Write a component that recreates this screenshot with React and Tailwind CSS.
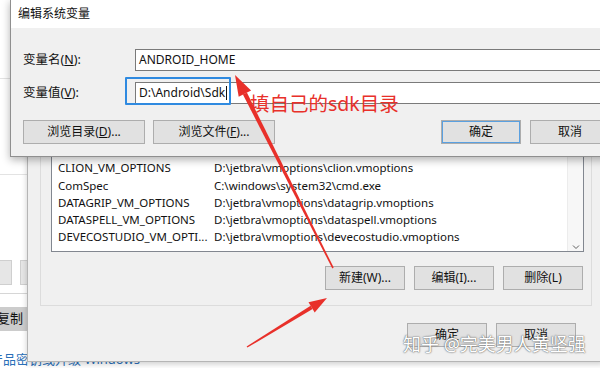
import React from 'react';

const font = "font-['Noto_Sans','Noto_Sans_CJK_SC',sans-serif]";

const rows = [
    ['CLION_VM_OPTIONS', 'D:\\jetbra\\vmoptions\\clion.vmoptions'],
    ['ComSpec', 'C:\\windows\\system32\\cmd.exe'],
    ['DATAGRIP_VM_OPTIONS', 'D:\\jetbra\\vmoptions\\datagrip.vmoptions'],
    ['DATASPELL_VM_OPTIONS', 'D:\\jetbra\\vmoptions\\dataspell.vmoptions'],
    ['DEVECOSTUDIO_VM_OPTI...', 'D:\\jetbra\\vmoptions\\devecostudio.vmoptions'],
    ['DriverData', 'C:\\Windows\\System32\\Drivers\\DriverData'],
];

const WinButton = ({ children, className = '' }) => (
    <div
        className={`h-[24px] flex items-center justify-center bg-[#e1e1e1] border border-[#adadad] text-[12px] text-[#111] ${className}`}
    >
        {children}
    </div>
);

const Arrows = () => (
    <svg className="absolute inset-0 pointer-events-none" width="600" height="368" viewBox="0 0 600 368">
        {/* arrow pointing at the variable name box */}
        <polygon points="235,75 238.7,96.8 251.1,90.4" fill="#e8302a" />
        <polygon points="242.9,94.6 246.9,92.6 333.7,267.6 332.3,268.4" fill="#e8302a" />
        {/* arrow pointing at the new button */}
        <polygon points="327,298 308.5,302.3 314.7,312.5" fill="#e8302a" />
        <polygon points="310.6,305.7 312.6,309.1 247.4,347.6 246.6,346.4" fill="#e8302a" />
    </svg>
);

export default function App() {
    return (
        <div className={`relative w-[600px] h-[368px] overflow-hidden bg-white ${font}`}>
            {/* Settings window peeking out on the left */}
            <div className="absolute left-0 top-[78px] w-[12px] h-px bg-[#e3e3e3]" />
            <div className="absolute left-0 top-[174px] w-[27px] h-px bg-[#e3e3e3]" />
            <div className="absolute left-0 top-[260px] w-[12px] h-[25px] bg-[#e6e6e6] border border-[#cfcfcf] border-l-0" />
            <div className="absolute left-[20px] top-[260px] w-[12px] h-[25px] bg-[#e6e6e6] border border-[#cfcfcf]" />
            <div className="absolute left-0 top-[293px] w-[27px] h-px bg-[#d6d6d6]" />
            <div className="absolute left-0 top-[307px] w-[27px] h-[24px] bg-[#cccccc] flex items-center text-[13px] text-[#111] overflow-hidden">
                <span className="-ml-[3px]">复制</span>
            </div>
            <div className="absolute left-[-10px] top-[350px] text-[13px] text-[#2a6fb8] whitespace-nowrap">
                产品密钥或升级 Windows
            </div>

            {/* Environment variables dialog (behind) */}
            <div className="absolute left-[27px] top-0 w-[577px] h-[362px] bg-[#f0f0f0] border-l border-b border-[#b5b5b5] shadow-[0_2px_6px_rgba(0,0,0,0.2)] flex flex-col pl-[12px] pr-[12px] pb-[14px]">
                <div className="flex-1 mt-[20px] border border-[#dcdcdc] flex flex-col pl-[10px] pr-[7px] pb-[15px]">
                    <div className="flex-1 border border-[#828790] bg-white flex overflow-hidden">
                        <div className="flex-1 flex flex-col justify-end overflow-hidden">
                            <div className="translate-y-[12px] flex flex-col">
                                {rows.map(([name, value]) => (
                                    <div key={name} className="h-[17.3px] flex items-center text-[11.5px] text-[#111] whitespace-nowrap">
                                        <span className="w-[162px] pl-[6px] shrink-0">{name}</span>
                                        <span>{value}</span>
                                    </div>
                                ))}
                            </div>
                        </div>
                        <div className="w-[16px] bg-[#f7f7f7] border-l border-[#ececec] flex flex-col justify-end items-center pb-[1px]">
                            <svg width="8" height="6" viewBox="0 0 8 6">
                                <path d="M1 1.5 L4 4.5 L7 1.5" stroke="#606060" strokeWidth="1" fill="none" />
                            </svg>
                        </div>
                    </div>
                    <div className="flex justify-end gap-[9px] mt-[14px] mr-[1px]">
                        <WinButton className="w-[80px]">新建(W)...</WinButton>
                        <WinButton className="w-[80px]">编辑(I)...</WinButton>
                        <WinButton className="w-[80px]">删除(L)</WinButton>
                    </div>
                </div>
                <div className="flex justify-end gap-[9px] mt-[17px] pr-[16px]">
                    <WinButton className="w-[80px] h-[23px]">确定</WinButton>
                    <WinButton className="w-[80px] h-[23px]">取消</WinButton>
                </div>
            </div>

            {/* Edit system variable dialog (front) */}
            <div className="absolute left-[10px] top-[-1px] w-[620px] h-[158px] bg-[#f0f0f0] border border-[#8f8f8f] shadow-[0_3px_8px_rgba(0,0,0,0.3)] flex flex-col">
                <div className="h-[28px] bg-white flex items-center pl-[7px] text-[12px] text-[#111]">编辑系统变量</div>
                <div className="flex flex-col pl-[12px] pr-[19px] pt-[21px]">
                    <div className="flex items-center h-[22px]">
                        <span className="w-[112px] text-[12.5px] text-[#111]">
                            变量名(<span className="underline">N</span>):
                        </span>
                        <div className="flex-1 h-[22px] bg-white border border-[#7a7a7a] flex items-center pl-[3px] text-[12px] text-[#111]">
                            ANDROID_HOME
                        </div>
                    </div>
                    <div className="flex items-center h-[22px] mt-[11px]">
                        <span className="w-[112px] text-[12.5px] text-[#111]">
                            变量值(<span className="underline">V</span>):
                        </span>
                        <div className="flex-1 h-[22px] bg-white border border-[#7a7a7a] flex items-center pl-[3px] text-[12px] text-[#111]">
                            D:\Android\Sdk<span className="w-px h-[14px] bg-[#111] ml-px" />
                        </div>
                    </div>
                    <div className="flex items-center mt-[16px] gap-[8px]">
                        <WinButton className="w-[122px] h-[23px]">
                            浏览目录(<span className="underline">D</span>)...
                        </WinButton>
                        <WinButton className="w-[122px] h-[23px]">
                            浏览文件(<span className="underline">F</span>)...
                        </WinButton>
                        <WinButton className="w-[80px] h-[23px] ml-auto border-[#0078d7] shadow-[inset_0_0_0_1px_#5aa0e0]">
                            确定
                        </WinButton>
                        <WinButton className="w-[80px] h-[23px] ml-[1px]">取消</WinButton>
                    </div>
                </div>
            </div>

            {/* Annotations */}
            <div className="absolute left-[125px] top-[77px] w-[106px] h-[28px] border-2 border-[#2f8ae0] rounded-[1px]" />
            <div className="absolute left-[250px] top-[91px] text-[19.5px] leading-[26px] text-[#e8302a] whitespace-nowrap">
                填自己的sdk目录
            </div>
            <Arrows />

            {/* Watermark */}
            <div className="absolute left-[403px] top-[331px] text-[18px] leading-[26px] text-white whitespace-nowrap [text-shadow:0_0_1px_#555,0_0_2px_#777]">
                知乎 @完美男人黄坚强
            </div>
        </div>
    );
}
